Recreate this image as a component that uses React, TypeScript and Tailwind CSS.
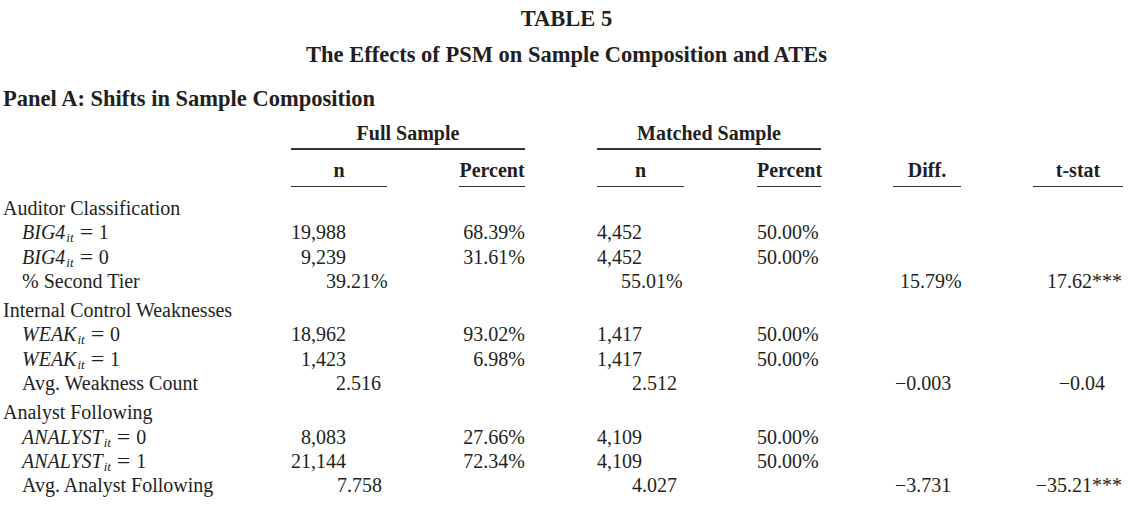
import React from "react";

const cols =
  "grid grid-cols-[291px_96px_72px_66px_72px_87px_73px_64px_72px_68px_72px_90px]";

const Var = ({ name, val }: { name: string; val: string }) => (
  <span className="whitespace-nowrap">
    <span className="italic">{name}</span>
    <span className="italic text-[13px] relative top-[3px] ml-[1px]">it</span>
    <span className="inline-block ml-[7px] mr-[7px] scale-x-[1.2]">=</span>
    <span>{val}</span>
  </span>
);

type Row = {
  label: React.ReactNode;
  heading?: boolean;
  fn?: string;
  fp?: string;
  favg?: string;
  favgPad?: string;
  mn?: string;
  mp?: string;
  mavg?: string;
  mavgPad?: string;
  diff?: string;
  diffPad?: string;
  t?: string;
  tPad?: string;
};

const groups: Row[][] = [
  [
    { label: "Auditor Classification", heading: true },
    { label: <Var name="BIG4" val="1" />, fn: "19,988", fp: "68.39%", mn: "4,452", mp: "50.00%" },
    { label: <Var name="BIG4" val="0" />, fn: "9,239", fp: "31.61%", mn: "4,452", mp: "50.00%" },
    {
      label: "% Second Tier",
      favg: "39.21%",
      favgPad: "pl-[35px]",
      mavg: "55.01%",
      mavgPad: "pl-[24px]",
      diff: "15.79%",
      diffPad: "pl-[7px]",
      t: "17.62***",
      tPad: "pr-[1px]",
    },
  ],
  [
    { label: "Internal Control Weaknesses", heading: true },
    { label: <Var name="WEAK" val="0" />, fn: "18,962", fp: "93.02%", mn: "1,417", mp: "50.00%" },
    { label: <Var name="WEAK" val="1" />, fn: "1,423", fp: "6.98%", mn: "1,417", mp: "50.00%" },
    {
      label: "Avg. Weakness Count",
      favg: "2.516",
      favgPad: "pl-[45px]",
      mavg: "2.512",
      mavgPad: "pl-[35px]",
      diff: "\u22120.003",
      diffPad: "pl-[2px]",
      t: "\u22120.04",
      tPad: "pr-[18px]",
    },
  ],
  [
    { label: "Analyst Following", heading: true },
    { label: <Var name="ANALYST" val="0" />, fn: "8,083", fp: "27.66%", mn: "4,109", mp: "50.00%" },
    { label: <Var name="ANALYST" val="1" />, fn: "21,144", fp: "72.34%", mn: "4,109", mp: "50.00%" },
    {
      label: "Avg. Analyst Following",
      favg: "7.758",
      favgPad: "pl-[46px]",
      mavg: "4.027",
      mavgPad: "pl-[35px]",
      diff: "\u22123.731",
      diffPad: "pl-[2px]",
      t: "\u221235.21***",
      tPad: "pr-[1px]",
    },
  ],
];

function DataRow({ r }: { r: Row }) {
  return (
    <div className={`${cols} h-[24.3px] leading-[24.3px] whitespace-nowrap`}>
      <div className={r.heading ? "pl-[3px]" : "pl-[22px]"}>{r.label}</div>
      {r.favg ? (
        <div className={r.favgPad}>{r.favg}</div>
      ) : (
        <div className="text-right pr-[41px]">{r.fn ?? ""}</div>
      )}
      <div className="col-span-2 text-right">{r.fp ?? ""}</div>
      <div />
      {r.mavg ? (
        <div className={r.mavgPad}>{r.mavg}</div>
      ) : (
        <div>{r.mn ?? ""}</div>
      )}
      <div />
      <div>{r.mp ?? ""}</div>
      <div />
      <div className={r.diffPad}>{r.diff ?? ""}</div>
      <div />
      <div className={`text-right ${r.tPad ?? ""}`}>{r.t ?? ""}</div>
    </div>
  );
}

const Line = ({ className = "" }: { className?: string }) => (
  <div className={`h-[1.5px] bg-[#333] ${className}`} />
);

export default function App() {
  return (
    <div className="w-[1133px] h-[510px] bg-white text-[#231f20] font-['Liberation_Serif','Times_New_Roman',serif] overflow-hidden">
      <div className="pt-[6px] text-center font-bold text-[22.5px] leading-[26px]">TABLE 5</div>
      <div className="mt-[10px] text-center font-bold text-[22.5px] leading-[26px]">
        The Effects of PSM on Sample Composition and ATEs
      </div>
      <div className="mt-[18px] pl-[3px] font-bold text-[22.5px] leading-[26px]">
        Panel A: Shifts in Sample Composition
      </div>

      <div className="text-[20px]">
        {/* Spanner header */}
        <div className={`${cols} mt-[9px] font-bold leading-[24px]`}>
          <div />
          <div className="col-span-3 text-center">
            <div>Full Sample</div>
            <Line className="mt-[3px]" />
          </div>
          <div />
          <div className="col-span-3 text-center">
            <div>Matched Sample</div>
            <Line className="mt-[3px]" />
          </div>
        </div>

        {/* Column header */}
        <div className={`${cols} mt-[8px] font-bold leading-[24px]`}>
          <div />
          <div className="text-center">
            <div>n</div>
            <Line className="mt-[4px]" />
          </div>
          <div />
          <div className="text-center">
            <div>Percent</div>
            <Line className="mt-[4px]" />
          </div>
          <div />
          <div className="text-center">
            <div>n</div>
            <Line className="mt-[4px]" />
          </div>
          <div />
          <div className="text-center">
            <div>Percent</div>
            <Line className="mt-[4px]" />
          </div>
          <div />
          <div className="text-center">
            <div>Diff.</div>
            <Line className="mt-[4px]" />
          </div>
          <div />
          <div className="text-center">
            <div>t-stat</div>
            <Line className="mt-[4px]" />
          </div>
        </div>

        <div className="mt-[9px] flex flex-col gap-[5px]">
          {groups.map((g, gi) => (
            <div key={gi}>
              {g.map((r, ri) => (
                <DataRow key={ri} r={r} />
              ))}
            </div>
          ))}
        </div>
      </div>
    </div>
  );
}
